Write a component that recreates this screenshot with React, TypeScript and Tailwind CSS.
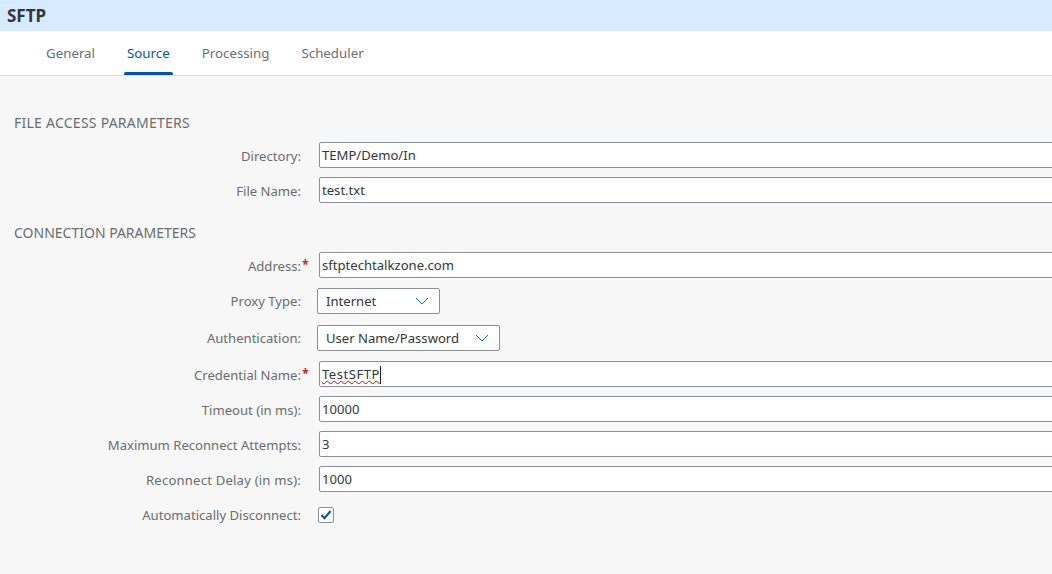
import type { ReactNode } from "react";

const tabs = ["General", "Source", "Processing", "Scheduler"];

function Row({ label, required, labelClass, className, children }: { label: string; required?: boolean; labelClass?: string; className?: string; children: ReactNode }) {
  return (
    <div className={`flex items-center h-[26px] ${className ?? ""}`}>
      <div className={`w-[301px] shrink-0 text-right text-[#6a6d70] relative ${labelClass ?? "pt-1"}`}>
        {label}
        {required && <span className="absolute left-full top-[3px] ml-px text-[12.5px] font-bold text-[#c6262e]">*</span>}
      </div>
      {children}
    </div>
  );
}

function TextField({ children }: { children: ReactNode }) {
  return (
    <div className="ml-[18px] flex-1 h-[26px] -mr-2 bg-white border border-[#89919a] rounded-[2px] pl-[2px] pt-[2px] flex items-center text-[#32363a]">
      {children}
    </div>
  );
}

function Dropdown({ value, width }: { value: string; width: string }) {
  return (
    <div className={`ml-4 h-[26px] ${width} bg-white border border-[#89919a] rounded-[2px] pl-2 pr-[10px] flex items-center justify-between text-[#32363a]`}>
      <span className="pt-[2px]">{value}</span>
      <svg width="14" height="8" viewBox="0 0 14 8" fill="none" stroke="#0a6ed1" strokeWidth="1">
        <path d="M1 1l6 6 6-6" />
      </svg>
    </div>
  );
}

export default function App() {
  return (
    <div className="w-[1052px] h-[574px] overflow-hidden bg-[#f7f7f7] text-[13.1px] font-['Noto_Sans','Open_Sans',sans-serif]">
      <div className="h-[31px] bg-[#d6ebff] pl-[7px] flex items-center">
        <span className="text-[17px] font-bold text-[#32363a]">SFTP</span>
      </div>

      <div className="h-[45px] bg-white border-b border-[#d9d9d9] flex gap-[26px] pl-[43px] text-[13.3px]">
        {tabs.map((t) => (
          <div
            key={t}
            className={`relative px-[3px] flex items-center pt-[1px] ${t === "Source" ? "text-[#0854a0]" : "text-[#6a6d70]"}`}
          >
            {t}
            {t === "Source" && <span className="absolute left-0 right-0 bottom-0 h-[3px] bg-[#0854a0] rounded-t-[2px]" />}
          </div>
        ))}
      </div>

      <h2 className="pl-[14px] mt-[38px] leading-[18px] text-[14px] tracking-[0.25px] text-[#6a6d70] font-normal">FILE ACCESS PARAMETERS</h2>
      <Row label="Directory:" className="mt-[10px]"><TextField>TEMP/Demo/In</TextField></Row>
      <Row label="File Name:" className="mt-[9px]"><TextField>test.txt</TextField></Row>

      <h2 className="pl-[14px] mt-[21px] leading-[18px] text-[14px] text-[#6a6d70] font-normal">CONNECTION PARAMETERS</h2>
      <Row label="Address:" required className="mt-[10px]"><TextField>sftptechtalkzone.com</TextField></Row>
      <Row label="Proxy Type:" labelClass="pt-[2px]" className="mt-[10px]"><Dropdown value="Internet" width="w-[123px]" /></Row>
      <Row label="Authentication:" labelClass="pt-[2px]" className="mt-[11px]"><Dropdown value="User Name/Password" width="w-[183px]" /></Row>
      <Row label="Credential Name:" required className="mt-[10px]">
        <TextField>
          <span className="underline decoration-wavy decoration-[#d00] decoration-1 tracking-[0.5px]">TestSFTP</span>
          <span className="w-px h-[18px] bg-[#222]" />
        </TextField>
      </Row>
      <Row label="Timeout (in ms):" className="mt-[9px]"><TextField>10000</TextField></Row>
      <Row label="Maximum Reconnect Attempts:" className="mt-[9px]"><TextField>3</TextField></Row>
      <Row label="Reconnect Delay (in ms):" labelClass="pt-1 tracking-[0.2px]" className="mt-[9px]"><TextField>1000</TextField></Row>
      <Row label="Automatically Disconnect:" labelClass="pt-[2px]" className="mt-[10px]">
        <div className="ml-[17px] w-4 h-4 bg-white border border-[#89919a] rounded-[2px] flex items-center justify-center">
          <svg width="12" height="10" viewBox="0 0 12 10" fill="none" stroke="#0854a0" strokeWidth="2">
            <path d="M1.5 5l3 3.2L10.5 1" />
          </svg>
        </div>
      </Row>
    </div>
  );
}
